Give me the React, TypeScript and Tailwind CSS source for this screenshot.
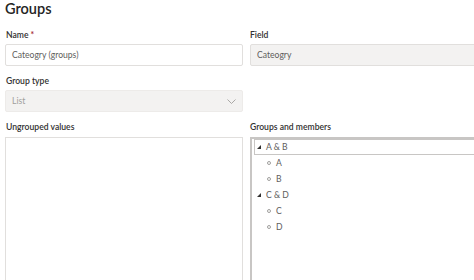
import React from "react";

const font = { fontFamily: 'Lato, "Open Sans", sans-serif' };

function Label({ children }: { children: React.ReactNode }) {
  return <div className="h-[14px] flex items-center text-[8.6px] font-semibold text-[#323130]">{children}</div>;
}

function Tri() {
  return (
    <svg width="4" height="4" viewBox="0 0 4 4" className="shrink-0">
      <polygon points="4,0 4,4 0,4" fill="#323130" />
    </svg>
  );
}

function Dot() {
  return (
    <svg width="4" height="4" viewBox="0 0 4 4" className="shrink-0">
      <circle cx="2" cy="2" r="1.5" fill="none" stroke="#8a8886" strokeWidth="0.8" />
    </svg>
  );
}

export default function App() {
  return (
    <div className="w-[474px] h-[280px] overflow-hidden bg-white text-[#323130]" style={font}>
      <div className="pl-[5px] h-[28px] flex items-start text-[14.5px] font-semibold leading-[18px] text-[#252423]">
        Groups
      </div>
      <div className="flex gap-[7px] pl-[5px]">
        <div className="w-[238px] shrink-0 flex flex-col">
          <div className="pl-[1px]">
            <Label>
              Name <span className="ml-[2px] text-[#a4262c]">*</span>
            </Label>
          </div>
          <div className="mt-[2px] h-[22px] border border-[#e1dfdd] rounded-[2px] flex items-center pl-[6px] text-[8.6px] text-[#605e5c]">
            Cateogry (groups)
          </div>
          <div className="mt-[8px] pl-[1px]">
            <Label>Group type</Label>
          </div>
          <div className="mt-[2px] h-[22px] bg-[#f3f2f1] border border-[#edebe9] rounded-[2px] flex items-center justify-between pl-[6px] pr-[6px] text-[8.6px] text-[#a19f9d]">
            <span>List</span>
            <svg width="9" height="5" viewBox="0 0 9 5">
              <polyline points="0.5,0.5 4.5,4.5 8.5,0.5" fill="none" stroke="#a19f9d" strokeWidth="0.9" />
            </svg>
          </div>
          <div className="mt-[8px] pl-[1px]">
            <Label>Ungrouped values</Label>
          </div>
          <div className="mt-[3px] h-[150px] border border-[#e1dfdd]" />
        </div>
        <div className="flex-1 flex flex-col">
          <Label>Field</Label>
          <div className="mt-[2px] h-[22px] bg-[#f3f2f1] border border-[#e1dfdd] rounded-[2px] flex items-center pl-[6px] text-[8.6px] text-[#605e5c] mr-[-4px]">
            Cateogry
          </div>
          <div className="mt-[54px]">
            <Label>Groups and members</Label>
          </div>
          <div className="mt-[3px] h-[150px] border-2 border-[#c8c6c4] border-r-0 pl-[2px] text-[8.6px] text-[#605e5c]">
            <div className="h-[16px] border border-[#c8c6c4] border-r-0 flex items-center gap-[5px] pl-[2px]">
              <Tri />
              <span>A &amp; B</span>
            </div>
            <div className="h-[16px] flex items-center gap-[5px] pl-[13px]">
              <Dot />
              <span>A</span>
            </div>
            <div className="h-[16px] flex items-center gap-[5px] pl-[13px]">
              <Dot />
              <span>B</span>
            </div>
            <div className="h-[16px] flex items-center gap-[5px] pl-[3px]">
              <Tri />
              <span>C &amp; D</span>
            </div>
            <div className="h-[16px] flex items-center gap-[5px] pl-[13px]">
              <Dot />
              <span>C</span>
            </div>
            <div className="h-[16px] flex items-center gap-[5px] pl-[13px]">
              <Dot />
              <span>D</span>
            </div>
          </div>
        </div>
      </div>
    </div>
  );
}
